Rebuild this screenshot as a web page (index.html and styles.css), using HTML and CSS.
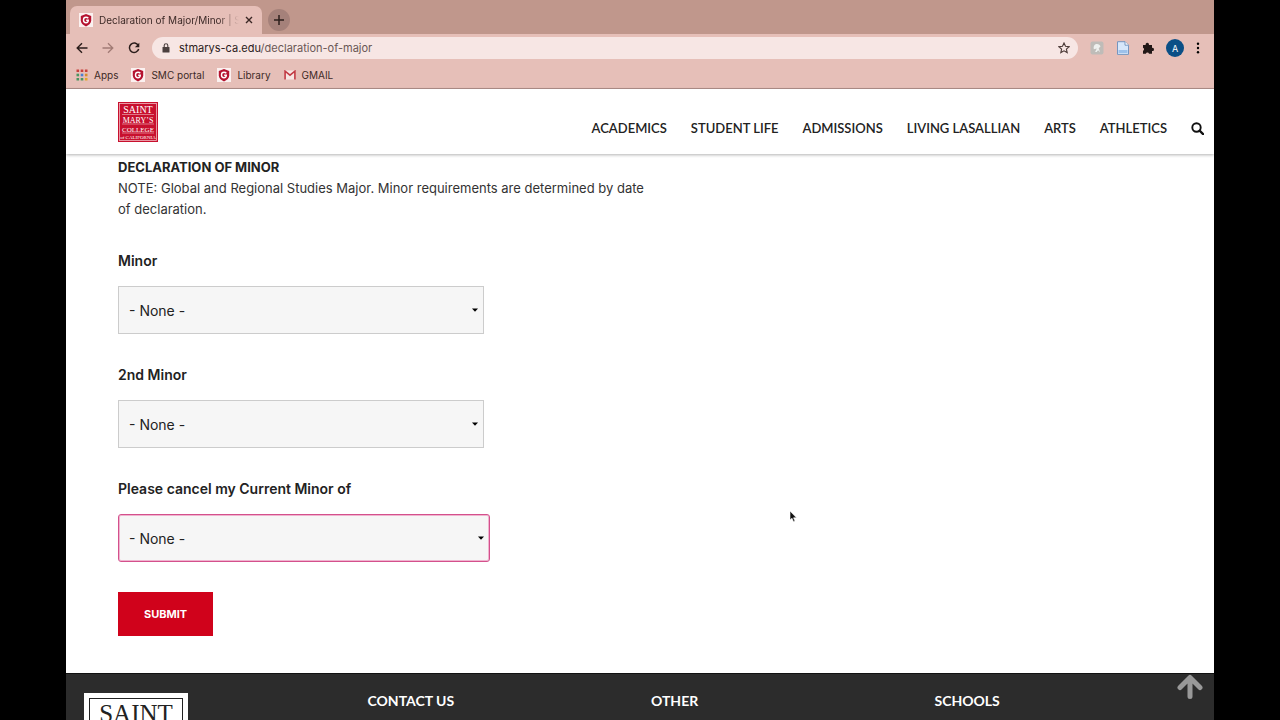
FILE: index.html
```html
<!DOCTYPE html>
<html lang="en">
<head>
<meta charset="utf-8">
<title>Declaration of Major/Minor | Saint Mary's College</title>
<link rel="stylesheet" href="styles.css">
</head>
<body>
<svg class="defs" width="0" height="0" aria-hidden="true">
  <symbol id="shield" viewBox="0 0 14 14">
    <rect width="14" height="14" fill="#fbf1f0"/>
    <path d="M7 1 12.2 3v4.6c0 2.700-2.200 4.400-5.200 5.800C4 12 1.800 10.300 1.800 7.600V3z" fill="#b5122f"/>
    <path d="M9.300 5.300C8.800 4.700 8 4.300 7 4.300 5.500 4.300 4.500 5.400 4.500 7s1 2.700 2.500 2.700c1.300 0 2.300-.7 2.300-2.400H7.200" fill="none" stroke="#fff" stroke-width="1.400"/>
  </symbol>
  <symbol id="caret" viewBox="0 0 6 4"><path d="M0 .5h6L3 3.800z" fill="#000"/></symbol>
</svg>

<div class="browser">
  <div class="tabs">
    <div class="tab">
      <svg class="favicon" viewBox="0 0 14 14" aria-hidden="true"><use href="#shield"/></svg>
      <span class="tab-title">Declaration of Major/Minor | Saint Mary's</span>
      <button class="icon-btn" aria-label="Close tab"><svg width="8" height="8" viewBox="0 0 8 8"><path d="M1 1l6 6M7 1 1 7" stroke="#3a2724" stroke-width="1.400"/></svg></button>
    </div>
    <button class="new-tab" aria-label="New tab"><svg width="10" height="10" viewBox="0 0 10 10"><path d="M5 0v10M0 5h10" stroke="#2c1f1d" stroke-width="1.500"/></svg></button>
  </div>

  <div class="toolbar">
    <div class="nav-buttons">
      <button class="icon-btn" aria-label="Back"><svg width="12" height="12" viewBox="0 0 12 12"><path d="M11.500 6H1.500M6 1.200 1.200 6 6 10.800" fill="none" stroke="#2b1d1b" stroke-width="1.400"/></svg></button>
      <button class="icon-btn" aria-label="Forward"><svg width="12" height="12" viewBox="0 0 12 12"><path d="M.5 6h10M6 1.200 10.800 6 6 10.800" fill="none" stroke="#a17b75" stroke-width="1.300"/></svg></button>
      <button class="icon-btn" aria-label="Reload"><svg width="12" height="12" viewBox="0 0 12 12"><path d="M10.300 3.500A4.700 4.700 0 1 0 10.700 7" fill="none" stroke="#2b1d1b" stroke-width="1.500"/><path d="M11.300.8v4.400H6.900z" fill="#2b1d1b"/></svg></button>
    </div>
    <div class="address">
      <svg width="8" height="10" viewBox="0 0 8 10" aria-hidden="true"><rect x=".5" y="4" width="7" height="5.600" rx=".6" fill="#4b3f3e"/><path d="M2.200 4V2.600a1.800 1.800 0 0 1 3.600 0V4" fill="none" stroke="#4b3f3e" stroke-width="1.100"/></svg>
      <span class="url">stmarys-ca.edu<span class="path">/declaration-of-major</span></span>
      <button class="icon-btn" aria-label="Bookmark this page"><svg width="12" height="12" viewBox="0 0 12 12"><path d="M6 1l1.500 3.300 3.600.4-2.700 2.400.8 3.500L6 8.800l-3.200 1.800.8-3.500L.9 4.700l3.600-.4z" fill="none" stroke="#4a3936" stroke-width="1.100"/></svg></button>
    </div>
    <div class="extensions">
      <svg width="14" height="14" viewBox="0 0 14 14" aria-hidden="true"><rect x=".5" y=".5" width="13" height="13" rx="2" fill="#bfbcb8"/><path d="M5.500 3.300c1.800-1 4.500 0 5 2.200L8.700 7.200l1.300 4-1.900-2-1.500 1.900-1.500 0 1.700-3.500-3 .6C3.300 5.800 4 4.200 5.500 3.300z" fill="#eef0ee"/></svg>
      <svg width="14" height="14" viewBox="0 0 14 14" aria-hidden="true"><path d="M1.500.7h7.500l3.500 3.500v9.200h-11z" fill="#d7e7fa" stroke="#7595bf"/><path d="M9 .7v3.500h3.500" fill="#fff" stroke="#7595bf"/><rect x="2.500" y="9" width="9" height="3" fill="#9dc1ea"/></svg>
      <svg width="12" height="12" viewBox="0 0 12 12" aria-hidden="true"><path d="M1 3h2.700a1.700 1.700 0 1 1 3.200 0H10v2.900a1.600 1.600 0 1 1 0 3.100v2.700H7a1.600 1.600 0 0 0-3.100 0H1V8.700a1.600 1.600 0 0 0 0-3z" fill="#221817"/></svg>
      <button class="avatar" aria-label="Profile">A</button>
      <button class="icon-btn" aria-label="Menu"><svg width="4" height="12" viewBox="0 0 4 12"><circle cx="2" cy="1.700" r="1.200"/><circle cx="2" cy="6" r="1.200"/><circle cx="2" cy="10.300" r="1.200"/></svg></button>
    </div>
  </div>

  <nav class="bookmarks" aria-label="Bookmarks">
    <a href="#"><svg width="12" height="12" viewBox="0 0 12 12" aria-hidden="true"><g fill="#c8403c"><path d="M.5.500h2.600v2.600H.5zM4.700.500h2.600v2.600H4.700zM8.900.500h2.600v2.600H8.900z"/></g><path d="M.5 4.700h2.600v2.600H.5z" fill="#4a9560"/><path d="M4.700 4.700h2.600v2.600H4.700z" fill="#4e7fd0"/><path d="M8.900 4.700h2.600v2.600H8.900z" fill="#d98c2c"/><path d="M.5 8.900h2.600v2.600H.5zM4.700 8.900h2.600v2.600H4.700z" fill="#4a9560"/><path d="M8.900 8.900h2.600v2.600H8.900z" fill="#e5a52e"/></svg>Apps</a>
    <a href="#"><svg class="favicon" viewBox="0 0 14 14" aria-hidden="true"><use href="#shield"/></svg>SMC portal</a>
    <a href="#"><svg class="favicon" viewBox="0 0 14 14" aria-hidden="true"><use href="#shield"/></svg>Library</a>
    <a href="#"><svg width="12" height="10" viewBox="0 0 12 10" aria-hidden="true"><rect x="1" y=".5" width="10" height="9" fill="#f7e6e3"/><path d="M1.100 9.500V1.200L6 5.200l4.900-4v8.300" fill="none" stroke="#c23b45" stroke-width="1.600"/></svg>GMAIL</a>
  </nav>

  <div class="page">
    <header class="site-header">
      <a href="#" class="brand" aria-label="Saint Mary's College of California">
        <svg width="40" height="40" viewBox="0 0 40 40">
          <rect width="40" height="40" fill="#c8102e"/>
          <rect x="1.500" y="1.500" width="37" height="37" fill="none" stroke="#f0b9c0" stroke-width=".8"/>
          <path d="M4 12.500h32M4 22h32M4 31h32" stroke="#eaa3ad" stroke-width=".7"/>
          <g class="seal-text" fill="#fff"><text x="20" y="11" font-size="10">SAINT</text><text x="20" y="20.500" font-size="8">MARY’S</text><text x="20" y="29.500" font-size="7">COLLEGE</text><text x="20" y="36.500" font-size="5">of CALIFORNIA</text></g>
        </svg>
      </a>
      <nav class="menu" aria-label="Main">
        <a href="#">ACADEMICS</a><a href="#">STUDENT LIFE</a><a href="#">ADMISSIONS</a><a href="#">LIVING LASALLIAN</a><a href="#">ARTS</a><a href="#">ATHLETICS</a>
        <button class="icon-btn" aria-label="Search"><svg width="13" height="13" viewBox="0 0 13 13"><circle cx="5.500" cy="5.500" r="4.200" fill="none" stroke="#111" stroke-width="1.900"/><path d="m8.600 8.600 3.500 3.500" stroke="#111" stroke-width="2.200" stroke-linecap="round"/></svg></button>
      </nav>
    </header>

    <main>
      <form class="declaration">
        <div class="intro">
          <h2>DECLARATION OF MINOR</h2>
          <p>NOTE: Global and Regional Studies Major. Minor requirements are determined by date of declaration.</p>
        </div>
        <div class="field">
          <label for="minor">Minor</label>
          <div class="select-box"><select id="minor"><option>- None -</option></select><svg class="caret" aria-hidden="true"><use href="#caret"/></svg></div>
        </div>
        <div class="field">
          <label for="minor2">2nd Minor</label>
          <div class="select-box"><select id="minor2"><option>- None -</option></select><svg class="caret" aria-hidden="true"><use href="#caret"/></svg></div>
        </div>
        <div class="field active">
          <label for="cancel">Please cancel my Current Minor of</label>
          <div class="select-box"><select id="cancel"><option>- None -</option></select><svg class="caret" aria-hidden="true"><use href="#caret"/></svg></div>
        </div>
        <button class="submit" type="button">SUBMIT</button>
      </form>
    </main>

    <footer class="site-footer">
      <svg width="104" height="104" viewBox="0 0 104 104" role="img" aria-label="Saint Mary's College">
        <rect width="104" height="104" fill="#fff"/><rect x="5.500" y="5.500" width="93" height="93" fill="none" stroke="#222"/>
        <g class="seal-text" fill="#222"><text x="52" y="29" font-size="25">SAINT</text><text x="52" y="53" font-size="21">MARY’S</text><text x="52" y="75" font-size="17">COLLEGE</text></g>
      </svg>
      <h3>CONTACT US</h3>
      <h3>OTHER</h3>
      <h3>SCHOOLS</h3>
      <a href="#" class="to-top" aria-label="Back to top"><svg width="26" height="26" viewBox="0 0 26 26"><path d="M13 22.500V4M3 13.500l10-10 10 10" fill="none" stroke="#999" stroke-width="5" stroke-linecap="round" stroke-linejoin="round"/></svg></a>
    </footer>
  </div>
</div>
<svg class="pointer" width="9" height="13" viewBox="0 0 9 13" aria-hidden="true"><path d="M1 1v9l2-1.800 1.500 3.500 1.500-.7-1.500-3.200H7.500z" fill="#111" stroke="#fff" stroke-width=".6"/></svg>
</body>
</html>
```
FILE: styles.css
```css
* { box-sizing: border-box; }
body {
  margin: 0;
  padding: 0 66px;
  height: 100vh;
  overflow: hidden;
  background: #000;
  color: #222;
  font-family: Inter, "Liberation Sans", sans-serif;
}
a { color: inherit; text-decoration: none; }
button { font-family: inherit; border: 0; padding: 0; cursor: pointer; }
svg { display: block; flex: none; }
h2, h3, p { margin: 0; }
.defs, .pointer { position: absolute; }
.pointer { left: 789px; top: 510px; }
.icon-btn { background: none; flex: none; }
.favicon { width: 14px; height: 14px; }

.browser { height: 100%; display: flex; flex-direction: column; background: #e6bfb8; }
.tabs {
  display: flex;
  align-items: center;
  gap: 6px;
  padding: 6px 4px 0;
  background: #c0978c;
}
.tab {
  display: flex;
  align-items: center;
  gap: 6px;
  width: 192px;
  height: 28px;
  padding: 0 9px;
  border-radius: 7px 7px 0 0;
  background: #e6bfb8;
}
.tab-title {
  flex: 1;
  overflow: hidden;
  white-space: nowrap;
  font-size: 10px;
  color: #3d2a27;
  mask-image: linear-gradient(90deg, #000 85%, transparent);
}
.new-tab {
  display: grid;
  place-items: center;
  width: 22px;
  height: 22px;
  border-radius: 50%;
  background: #a5817a;
}
.toolbar { display: flex; align-items: center; gap: 12px; height: 28px; padding: 0 14px 0 10px; }
.nav-buttons { display: flex; gap: 14px; }
.address {
  flex: 1;
  display: flex;
  align-items: center;
  gap: 9px;
  height: 22px;
  padding: 0 8px 0 10px;
  border-radius: 11px;
  background: #f7e6e4;
}
.url { flex: 1; font-size: 11px; color: #2b2020; }
.path { color: #6a5755; }
.extensions { display: flex; align-items: center; gap: 12px; }
.avatar {
  width: 18px;
  height: 18px;
  border-radius: 50%;
  background: #0b4f86;
  color: #fff;
  font-size: 9px;
}
.bookmarks {
  display: flex;
  gap: 13px;
  height: 27px;
  padding: 0 10px;
  border-bottom: 1px solid #b3918c;
  font-size: 10px;
  color: #3d2a27;
}
.bookmarks a { display: flex; align-items: center; gap: 6px; }

.page { flex: 1; min-height: 0; display: flex; flex-direction: column; background: #fff; }
.site-header {
  display: flex;
  align-items: center;
  justify-content: space-between;
  height: 65px;
  padding: 0 10px 0 52px;
  box-shadow: 0 1px 3px rgba(0, 0, 0, .3);
}
.menu {
  display: flex;
  align-items: center;
  gap: 24px;
  padding-top: 13px;
  font: 600 13px/16px Lato, sans-serif;
}
.seal-text { font-family: "Liberation Serif", serif; text-anchor: middle; }
.declaration {
  display: flex;
  flex-direction: column;
  align-items: flex-start;
  gap: 30px;
  padding: 3px 52px 37px;
}
.intro { max-width: 540px; font-size: 13px; line-height: 21px; }
.intro h2 { font-size: 13px; line-height: 21px; font-weight: 700; }
.intro p { color: #333; }
.field { display: flex; flex-direction: column; gap: 15px; width: 100%; max-width: 366px; }
.field.active { max-width: 372px; }
.field label { font-size: 14px; line-height: 21px; font-weight: 600; }
.select-box { position: relative; }
select {
  appearance: none;
  display: block;
  width: 100%;
  height: 48px;
  padding: 0 24px 0 10px;
  border: 1px solid #ccc;
  border-radius: 0;
  background: #f6f6f6;
  color: #222;
  font: 14px Inter, sans-serif;
}
.active select { border: 1px solid #d4508c; border-radius: 3px; box-shadow: inset 0 0 0 1px #efb4cf; }
.caret { position: absolute; right: 6px; top: 22px; width: 6px; height: 4px; pointer-events: none; }
.submit {
  height: 44px;
  padding: 0 26px;
  background: #d0021b;
  color: #fff;
  font-size: 11px;
  font-weight: 700;
}
.site-footer {
  position: relative;
  flex: 1;
  min-height: 0;
  overflow: hidden;
  display: grid;
  grid-template-columns: repeat(4, 1fr);
  align-items: start;
  gap: 22px;
  padding: 19px 18px 0;
  border-top: 1px solid #111;
  background: #2c2c2c;
  color: #fff;
}
.site-footer h3 { font: 700 14px/16px Lato, sans-serif; }
.to-top { position: absolute; right: 11px; top: 0; }
```
